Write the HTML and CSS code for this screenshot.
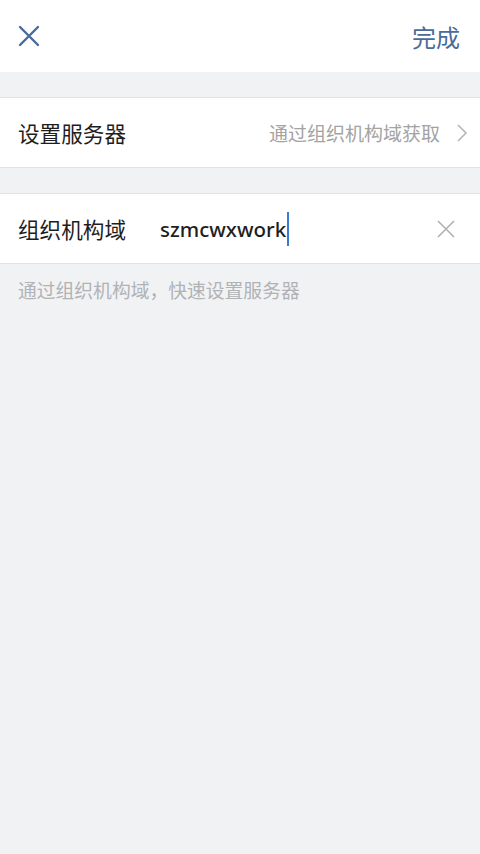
FILE: index.html
```html
<!DOCTYPE html>
<html lang="zh-CN">
  <head>
    <meta charset="UTF-8" />
    <meta name="viewport" content="width=device-width, initial-scale=1.0" />
    <title>设置服务器</title>
    <link rel="stylesheet" href="styles.css">
  </head>
  <body>
    <div class="header">
      <svg class="close" width="24" height="24" viewBox="0 0 24 24">
        <path d="M3 3 L21 21 M21 3 L3 21" stroke="#4a6a99" stroke-width="2.4" fill="none" stroke-linecap="round" />
      </svg>
      <span class="done">完成</span>
    </div>

    <div class="gap"></div>

    <div class="row">
      <span class="label">设置服务器</span>
      <span class="value">通过组织机构域获取</span>
      <svg class="chevron" width="12" height="20" viewBox="0 0 12 20">
        <path d="M2 2 L10 10 L2 18" stroke="#b5b5b5" stroke-width="1.6" fill="none" />
      </svg>
    </div>

    <div class="gap"></div>

    <div class="row">
      <span class="label">组织机构域</span>
      <span class="input">szmcwxwork<span class="cursor"></span></span>
      <svg class="clear" width="20" height="20" viewBox="0 0 20 20">
        <path d="M2 2 L18 18 M18 2 L2 18" stroke="#b0b0b0" stroke-width="1.6" fill="none" />
      </svg>
    </div>

    <p class="hint">通过组织机构域，快速设置服务器</p>
  </body>
</html>
```

FILE: styles.css
```css
body {
  margin: 0;
  background-color: #f1f2f4;
  font-family: "Noto Sans CJK SC", "Noto Sans", sans-serif;
  min-height: 854px;
}

.header {
  height: 72px;
  background-color: white;
  display: flex;
  align-items: center;
  justify-content: space-between;
  padding: 0 20px 0 17px;
}

.done {
  font-size: 24px;
  color: #4a6a99;
}

.gap {
  height: 25px;
}

.row {
  height: 69px;
  background-color: white;
  border-top: 1px solid #e1e2e5;
  border-bottom: 1px solid #e1e2e5;
  display: flex;
  align-items: center;
  padding: 0 12px 0 18px;
}

.label {
  font-size: 21.6px;
  color: #1e1e1e;
  width: 142px;
}

.value {
  margin-left: auto;
  font-size: 19px;
  color: #a3a3a3;
  margin-right: 16px;
}

.input {
  font-family: "Noto Sans", sans-serif;
  font-size: 20.5px;
  font-weight: 500;
  color: #1e1e1e;
  flex: 1;
  display: flex;
  align-items: center;
}

.cursor {
  display: inline-block;
  width: 2px;
  height: 34px;
  background-color: #3b7bd6;
  margin-left: 1px;
}

.clear {
  margin-right: 12px;
}

.hint {
  margin: 12px 18px;
  font-size: 18.8px;
  color: #b0b2b6;
}
```
